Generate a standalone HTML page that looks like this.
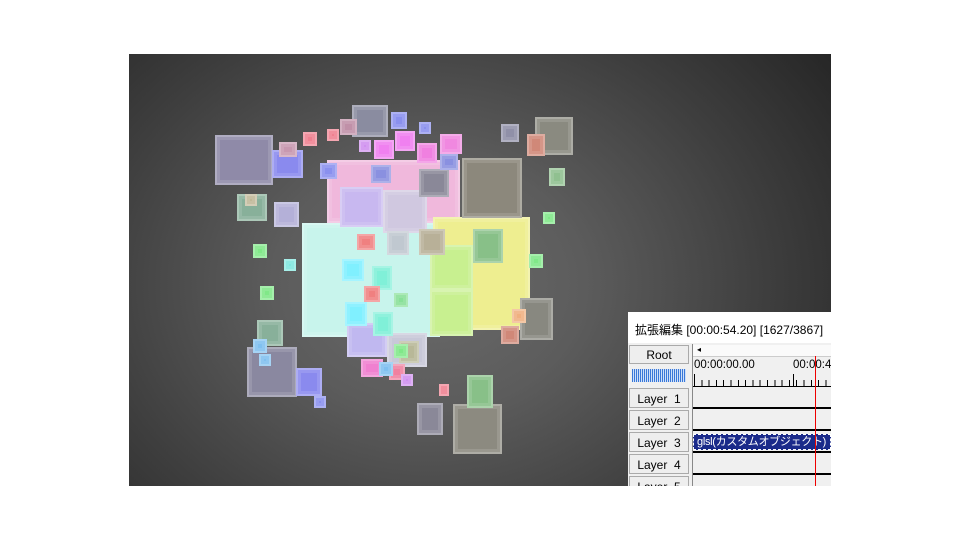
<!DOCTYPE html><html><head><meta charset="utf-8"><style>
body{margin:0;width:960px;height:540px;background:#fff;position:relative;overflow:hidden;font-family:"Liberation Sans","Noto Sans CJK JP",sans-serif}
#v{position:absolute;left:129px;top:54px;width:702px;height:432px;overflow:hidden;background:radial-gradient(ellipse 520px 420px at 300px 230px,#6a6a6a 0%,#5c5c5c 30%,#3e3e3e 65%,#222 100%)}
.c{position:absolute;box-sizing:border-box;border:2px solid rgba(255,255,255,.3);box-shadow:inset 0 0 0 3px rgba(255,255,255,.12)}
#p{position:absolute;left:628px;top:312px;width:203px;height:174px;background:#f0f0f0;font-size:12px;color:#000;overflow:hidden}
.b{position:absolute;left:1px;width:60px;height:19px;border:1px solid #aaa;background:#eee;text-align:center;line-height:19px;box-sizing:border-box;font-size:12px}
.r{position:absolute;left:65px;right:0;height:2px;background:#000}
</style></head><body>
<div id="v">
<div class="c" style="left:86px;top:81px;width:58px;height:50px;background:#8f8aa8"></div>
<div class="c" style="left:143px;top:96px;width:31px;height:28px;background:#8a8aee"></div>
<div class="c" style="left:223px;top:51px;width:36px;height:32px;background:#8a8ca0"></div>
<div class="c" style="left:198px;top:106px;width:133px;height:63px;background:#f0b8dc"></div>
<div class="c" style="left:173px;top:169px;width:138px;height:114px;background:#c8f4ec"></div>
<div class="c" style="left:304px;top:163px;width:97px;height:113px;background:#eeee90"></div>
<div class="c" style="left:301px;top:191px;width:43px;height:45px;background:#c8f090"></div>
<div class="c" style="left:301px;top:236px;width:43px;height:46px;background:#c8f090"></div>
<div class="c" style="left:211px;top:133px;width:43px;height:40px;background:#c8b8f0"></div>
<div class="c" style="left:254px;top:136px;width:44px;height:43px;background:#d0c8e0"></div>
<div class="c" style="left:333px;top:104px;width:60px;height:60px;background:#8c887c"></div>
<div class="c" style="left:406px;top:63px;width:38px;height:38px;background:#8a8a80"></div>
<div class="c" style="left:290px;top:115px;width:30px;height:28px;background:#8a8898"></div>
<div class="c" style="left:218px;top:269px;width:40px;height:34px;background:#c0b8f0"></div>
<div class="c" style="left:258px;top:279px;width:40px;height:34px;background:#c8c8d8"></div>
<div class="c" style="left:118px;top:293px;width:50px;height:50px;background:#8a88a0"></div>
<div class="c" style="left:167px;top:314px;width:26px;height:28px;background:#8a8aee"></div>
<div class="c" style="left:324px;top:350px;width:49px;height:50px;background:#8c8a80"></div>
<div class="c" style="left:338px;top:321px;width:26px;height:33px;background:#88c088"></div>
<div class="c" style="left:391px;top:244px;width:33px;height:42px;background:#888880"></div>
<div class="c" style="left:288px;top:349px;width:26px;height:32px;background:#8a8898"></div>
<div class="c" style="left:108px;top:140px;width:30px;height:27px;background:#88b09a"></div>
<div class="c" style="left:128px;top:266px;width:26px;height:26px;background:#88b09a"></div>
<div class="c" style="left:344px;top:175px;width:30px;height:34px;background:#88c088"></div>
<div class="c" style="left:290px;top:175px;width:26px;height:26px;background:#b8b098"></div>
<div class="c" style="left:145px;top:148px;width:25px;height:25px;background:#b4b0d8"></div>
<div class="c" style="left:245px;top:86px;width:20px;height:19px;background:#f080f0"></div>
<div class="c" style="left:266px;top:77px;width:20px;height:20px;background:#f080f0"></div>
<div class="c" style="left:288px;top:89px;width:20px;height:20px;background:#f080e0"></div>
<div class="c" style="left:311px;top:80px;width:22px;height:20px;background:#f088e0"></div>
<div class="c" style="left:311px;top:100px;width:18px;height:16px;background:#8a90e0"></div>
<div class="c" style="left:262px;top:58px;width:16px;height:17px;background:#8a90ee"></div>
<div class="c" style="left:191px;top:109px;width:17px;height:16px;background:#8a90ee"></div>
<div class="c" style="left:242px;top:111px;width:20px;height:18px;background:#8a90e0"></div>
<div class="c" style="left:211px;top:65px;width:17px;height:16px;background:#c090a8"></div>
<div class="c" style="left:150px;top:88px;width:18px;height:15px;background:#c898b0"></div>
<div class="c" style="left:398px;top:80px;width:18px;height:22px;background:#d08878"></div>
<div class="c" style="left:372px;top:70px;width:18px;height:18px;background:#9090a8"></div>
<div class="c" style="left:420px;top:114px;width:16px;height:18px;background:#90c090"></div>
<div class="c" style="left:213px;top:205px;width:22px;height:22px;background:#80f0ff"></div>
<div class="c" style="left:243px;top:212px;width:20px;height:24px;background:#80f0d8"></div>
<div class="c" style="left:216px;top:248px;width:22px;height:24px;background:#80f0ff"></div>
<div class="c" style="left:244px;top:258px;width:20px;height:24px;background:#80f0d8"></div>
<div class="c" style="left:258px;top:177px;width:22px;height:24px;background:#c0c8d0"></div>
<div class="c" style="left:232px;top:305px;width:22px;height:18px;background:#f080d0"></div>
<div class="c" style="left:372px;top:272px;width:18px;height:18px;background:#d08878"></div>
<div class="c" style="left:270px;top:287px;width:20px;height:22px;background:#b8b898"></div>
<div class="c" style="left:265px;top:239px;width:14px;height:14px;background:#88e098"></div>
<div class="c" style="left:265px;top:290px;width:14px;height:14px;background:#80e888"></div>
<div class="c" style="left:260px;top:310px;width:16px;height:16px;background:#f080a0"></div>
<div class="c" style="left:235px;top:232px;width:16px;height:16px;background:#f08080"></div>
<div class="c" style="left:228px;top:180px;width:18px;height:16px;background:#f08080"></div>
<div class="c" style="left:124px;top:190px;width:14px;height:14px;background:#80e888"></div>
<div class="c" style="left:131px;top:232px;width:14px;height:14px;background:#80e888"></div>
<div class="c" style="left:124px;top:285px;width:14px;height:14px;background:#80c0f0"></div>
<div class="c" style="left:383px;top:255px;width:14px;height:14px;background:#f0b080"></div>
<div class="c" style="left:400px;top:200px;width:14px;height:14px;background:#80e888"></div>
<div class="c" style="left:414px;top:158px;width:12px;height:12px;background:#80e888"></div>
<div class="c" style="left:174px;top:78px;width:14px;height:14px;background:#f08090"></div>
<div class="c" style="left:198px;top:75px;width:12px;height:12px;background:#f08090"></div>
<div class="c" style="left:230px;top:86px;width:12px;height:12px;background:#d090f0"></div>
<div class="c" style="left:290px;top:68px;width:12px;height:12px;background:#8a90ee"></div>
<div class="c" style="left:250px;top:308px;width:14px;height:14px;background:#80c0f0"></div>
<div class="c" style="left:272px;top:320px;width:12px;height:12px;background:#d090f0"></div>
<div class="c" style="left:310px;top:330px;width:10px;height:12px;background:#f08090"></div>
<div class="c" style="left:185px;top:342px;width:12px;height:12px;background:#8a90ee"></div>
<div class="c" style="left:130px;top:300px;width:12px;height:12px;background:#80c0f0"></div>
<div class="c" style="left:155px;top:205px;width:12px;height:12px;background:#80e8e0"></div>
<div class="c" style="left:116px;top:140px;width:12px;height:12px;background:#c0b898"></div>
</div>
<div id="p">
<div style="position:absolute;left:0;top:0;width:203px;height:31px;background:#fff"></div>
<div style="position:absolute;left:7px;top:9px;font-size:12px;white-space:nowrap">拡張編集 [00:00:54.20] [1627/3867]</div>
<div class="b" style="top:33px">Root</div>
<div style="position:absolute;left:4px;top:57px;width:54px;height:13px;background:repeating-linear-gradient(90deg,#3a78d8 0 1px,#cfe0f8 1px 2px)"></div>
<div class="b" style="top:76px;height:20px;line-height:20px">Layer &nbsp;1</div>
<div class="b" style="top:98px;height:20px;line-height:20px">Layer &nbsp;2</div>
<div class="b" style="top:120px;height:20px;line-height:20px">Layer &nbsp;3</div>
<div class="b" style="top:142px;height:20px;line-height:20px">Layer &nbsp;4</div>
<div class="b" style="top:164px;height:20px;line-height:20px">Layer &nbsp;5</div>
<div style="position:absolute;left:64px;top:32px;width:1px;height:142px;background:#888"></div>
<div style="position:absolute;left:65px;top:33px;right:0;height:11px;background:#fafafa;border-bottom:1px solid #ccc"></div>
<div style="position:absolute;left:69px;top:33px;font-size:8px">◂</div>
<div style="position:absolute;left:66px;top:47px;font-size:11.5px;white-space:nowrap">00:00:00.00</div>
<div style="position:absolute;left:165px;top:47px;font-size:11.5px;white-space:nowrap">00:00:4</div>
<div style="position:absolute;left:66px;top:68px;right:0;height:6px;background:repeating-linear-gradient(90deg,#000 0 1px,transparent 1px 7.3px)"></div>
<div style="position:absolute;left:66px;top:62px;width:1px;height:12px;background:#000"></div>
<div style="position:absolute;left:165px;top:62px;width:1px;height:12px;background:#000"></div>
<div style="position:absolute;left:65px;top:74px;right:0;height:1px;background:#000"></div>
<div class="r" style="top:95px"></div><div class="r" style="top:117px"></div><div class="r" style="top:139px"></div><div class="r" style="top:161px"></div>
<div style="position:absolute;left:65px;top:122px;right:0;height:16px;background:#1a2a8a;border:1px dashed #fff;box-sizing:border-box;color:#fff;font-size:11px;line-height:14px;padding-left:3px;white-space:nowrap;overflow:hidden;letter-spacing:-0.3px">glsl(カスタムオブジェクト)</div>
<div style="position:absolute;left:187px;top:44px;width:1px;height:130px;background:#e00"></div>
</div>
</body></html>
